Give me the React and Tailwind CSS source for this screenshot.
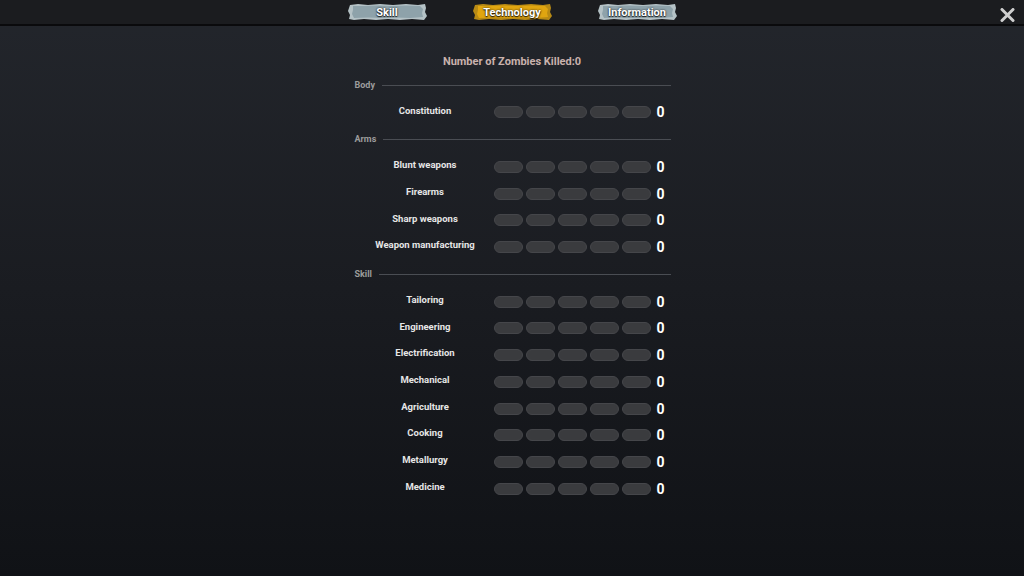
import React from "react";

const sections = [
  { name: "Body", rows: ["Constitution"] },
  { name: "Arms", rows: ["Blunt weapons", "Firearms", "Sharp weapons", "Weapon manufacturing"] },
  {
    name: "Skill",
    rows: ["Tailoring", "Engineering", "Electrification", "Mechanical", "Agriculture", "Cooking", "Metallurgy", "Medicine"],
  },
];

function Brush({ fill, edge }) {
  return (
    <svg className="absolute inset-0" width="79" height="16" viewBox="0 0 79 16" preserveAspectRatio="none">
      <polygon
        points="2,1 10,0 20,1 32,0 45,1 58,0 70,1 77,0 78,4 77,8 79,12 76,16 64,15 52,16 40,15 28,16 16,15 6,16 1,15 2,11 0,7 1,4"
        fill={edge}
      />
      <polygon
        points="5,2 16,2 30,1.5 44,2 58,1.5 72,2 75,5 74,9 75,13 62,14 48,13.5 34,14 20,13.5 6,14 4,10 5,6"
        fill={fill}
      />
    </svg>
  );
}

function Tab({ label, active }) {
  return (
    <div className="relative w-[79px] h-[16px] flex items-center justify-center">
      {active ? <Brush fill="#e0a510" edge="#b88a14" /> : <Brush fill="#8ea2aa" edge="#b5c2c6" />}
      <span className="relative text-[11px] font-bold text-white leading-none [text-shadow:0_0_2px_rgba(0,0,0,0.9),0_1px_1px_rgba(0,0,0,0.8)]">
        {label}
      </span>
    </div>
  );
}

function Row({ label }) {
  return (
    <div className="h-[26.7px] flex items-center">
      <div className="w-[139px] pl-[2px] text-center text-[9.5px] font-bold text-[#e6e6e6] -mt-[4px] leading-none">{label}</div>
      <div className="flex gap-[3px]">
        {[0, 1, 2, 3, 4].map((i) => (
          <div key={i} className="w-[29px] h-[12px] rounded-[6px] bg-[#3a3b3e] border border-[#45464a]" />
        ))}
      </div>
      <div className="ml-[6px] text-[14px] font-bold text-white leading-none">0</div>
    </div>
  );
}

export default function App() {
  return (
    <div className="w-[1024px] h-[576px] overflow-hidden flex flex-col bg-gradient-to-b from-[#23262c] via-[#1a1c21] to-[#101216] [font-family:Roboto,'Liberation_Sans',sans-serif]">
      <div className="h-[24px] bg-[#1b1c1f] relative flex justify-center gap-[46px] pt-[4px]">
        <Tab label="Skill" />
        <Tab label="Technology" active />
        <Tab label="Information" />
        <svg className="absolute left-[1000px] top-[8px]" width="15" height="14" viewBox="0 0 15 14">
          <path d="M2 1.5 L13 12.5 M13 1.5 L2 12.5" stroke="#cfcfcf" strokeWidth="3" strokeLinecap="round" />
        </svg>
      </div>
      <div className="h-[2px] bg-[#0a0a0c]" />
      <div className="flex flex-col items-center pt-[27px]">
        <div className="text-[11px] font-bold text-[#c9b2ad] leading-[18px] h-[18px]">Number of Zombies Killed:0</div>
        <div className="w-[316px] ml-[1px] flex flex-col">
          {sections.map((s) => (
            <div key={s.name} className="flex flex-col">
              <div className="h-[28px] flex items-center">
                <span className="text-[9px] font-bold text-[#9c9c9c] leading-none">{s.name}</span>
                <div className="flex-1 h-px bg-[#4a4d53] ml-[7px]" />
              </div>
              {s.rows.map((r) => (
                <Row key={r} label={r} />
              ))}
            </div>
          ))}
        </div>
      </div>
    </div>
  );
}
